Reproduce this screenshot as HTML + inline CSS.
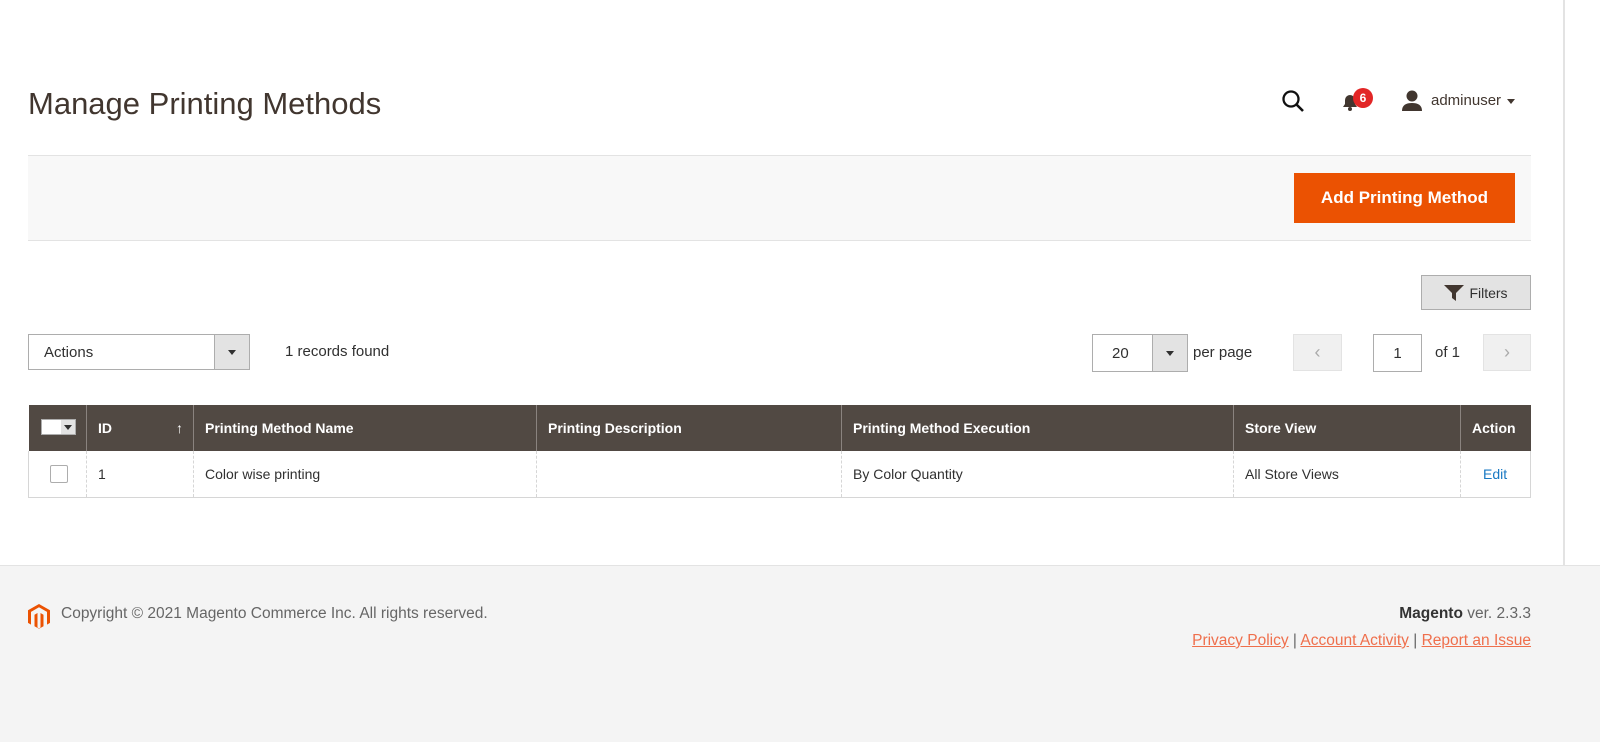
<!DOCTYPE html>
<html><head><style>
*{box-sizing:border-box;margin:0;padding:0}
body{width:1600px;height:742px;background:#fff;font-family:"Liberation Sans",sans-serif;color:#303030;position:relative;overflow:hidden;font-size:14px}
.abs{position:absolute}
h1{position:absolute;left:28px;top:86px;font-size:31px;font-weight:normal;color:#41362f}
.band{left:28px;top:155px;width:1503px;height:86px;background:#f8f8f8;border-top:1px solid #e3e3e3;border-bottom:1px solid #e3e3e3}
.btn{left:1294px;top:173px;width:221px;height:50px;background:#eb5202;color:#fff;font-weight:bold;font-size:17px;display:flex;align-items:center;justify-content:center}
.filt{left:1421px;top:275px;width:110px;height:35px;background:#e3e3e3;border:1px solid #adadad;display:flex;align-items:center;justify-content:center;font-size:14px;color:#303030;gap:5px}
.sel{border:1px solid #adadad;background:#fff;display:flex;align-items:center}
.dd{position:absolute;right:0;top:0;bottom:0;background:#e3e3e3;border-left:1px solid #adadad;display:flex;align-items:center;justify-content:center}
.tri{width:0;height:0;border-left:4px solid transparent;border-right:4px solid transparent;border-top:5px solid #303030}
.pg{background:#f0f0f0;border:1px solid #e3e3e3;color:#aaa;display:flex;align-items:center;justify-content:center;font-size:18px}
table{position:absolute;left:28px;top:405px;width:1503px;border-collapse:collapse}
th{background:#514943;color:#fff;text-align:left;font-size:14px;height:46px;padding-left:11px;border-left:1px solid #8a837f}
th:first-child{border-left:none}
td{height:46px;padding-left:11px;font-size:14px;border-left:1px dashed #d6d6d6;border-bottom:1px solid #d6d6d6}
td:first-child{border-left:1px solid #d6d6d6}
td:last-child{border-right:1px solid #d6d6d6}
.foot{left:0;top:565px;width:1600px;height:177px;background:#f4f4f4;border-top:1px solid #e3e3e3}
a{color:#ef6f4c;text-decoration:underline}
</style></head><body>
<div class="abs" style="left:1563px;top:0;width:2px;height:565px;background:#e3e3e3"></div>
<h1>Manage Printing Methods</h1>
<svg class="abs" style="left:1281px;top:89px" width="24" height="24" viewBox="0 0 24 24"><circle cx="10" cy="10" r="7.5" fill="none" stroke="#111" stroke-width="2.3"/><path d="M15.5 15.5L22 22" stroke="#111" stroke-width="2.6"/></svg>
<svg class="abs" style="left:1340px;top:92px" width="20" height="20" viewBox="0 0 20 20"><path d="M3 15h14l-2-3V8a5 5 0 0 0-10 0v4z" fill="#41362f"/><circle cx="10" cy="17" r="2" fill="#41362f"/></svg>
<div class="abs" style="left:1353px;top:88px;width:20px;height:20px;border-radius:50%;background:#e22626;color:#fff;font-weight:bold;font-size:12px;text-align:center;line-height:20px">6</div>
<svg class="abs" style="left:1401px;top:89px" width="22" height="22" viewBox="0 0 22 22"><circle cx="11" cy="7" r="5.5" fill="#41362f"/><path d="M1 22c0-6 4-8 10-8s10 2 10 8z" fill="#41362f"/></svg>
<div class="abs" style="left:1431px;top:92px;font-size:15px;color:#41362f">adminuser</div>
<div class="abs tri" style="left:1507px;top:99px;border-top-color:#41362f"></div>
<div class="abs band"></div>
<div class="abs btn">Add Printing Method</div>
<div class="abs filt"><svg width="20" height="16" viewBox="0 0 20 16"><path d="M0 0h20l-8 8v8l-4-3V8z" fill="#41362f"/></svg>Filters</div>
<div class="abs sel" style="left:28px;top:334px;width:222px;height:36px;padding-left:15px;font-size:15px">Actions<div class="dd" style="width:35px"><div class="tri"></div></div></div>
<div class="abs" style="left:285px;top:343px;font-size:15px">1 records found</div>
<div class="abs sel" style="left:1092px;top:334px;width:96px;height:38px;padding-left:19px;font-size:15px">20<div class="dd" style="width:35px"><div class="tri"></div></div></div>
<div class="abs" style="left:1193px;top:344px;font-size:15px">per page</div>
<div class="abs pg" style="left:1293px;top:334px;width:49px;height:37px">&#8249;</div>
<div class="abs sel" style="left:1373px;top:334px;width:49px;height:38px;justify-content:center;font-size:15px">1</div>
<div class="abs" style="left:1435px;top:344px;font-size:15px">of 1</div>
<div class="abs pg" style="left:1483px;top:334px;width:48px;height:37px">&#8250;</div>
<table>
<tr><th style="width:58px"><div style="display:inline-flex;width:35px;height:16px;background:#fff;border:1px solid #adadad;margin-left:1px"><div style="width:19px"></div><div style="flex:1;background:#e3e3e3;display:flex;align-items:center;justify-content:center"><div class="tri"></div></div></div></th>
<th style="width:107px">ID<span style="float:right;margin-right:10px;font-weight:normal">&#8593;</span></th>
<th style="width:343px">Printing Method Name</th><th style="width:305px">Printing Description</th><th style="width:392px">Printing Method Execution</th><th style="width:227px">Store View</th><th>Action</th></tr>
<tr><td><div style="width:18px;height:18px;border:1px solid #adadad;margin-left:10px;border-radius:2px"></div></td><td>1</td><td>Color wise printing</td><td></td><td>By Color Quantity</td><td>All Store Views</td><td><span style="color:#1979c3;margin-left:11px">Edit</span></td></tr>
</table>
<div class="abs foot"></div>
<svg class="abs" style="left:28px;top:604px" width="22" height="25" viewBox="0 0 22 25"><path d="M11 0L0 6.3v12.6l3 1.7V7.9l8-4.6 8 4.6v12.7l3-1.7V6.3zM9.5 9v14.5L11 24.4l1.5-.9V9l3 1.7v11.5l-4.5 2.6-4.5-2.6V10.7z" fill="#eb5202"/></svg>
<div class="abs" style="left:61px;top:605px;font-size:15.5px;color:#666">Copyright © 2021 Magento Commerce Inc. All rights reserved.</div>
<div class="abs" style="right:69px;top:605px;font-size:15.5px;color:#666"><b style="color:#333">Magento</b> ver. 2.3.3</div>
<div class="abs" style="right:69px;top:632px;font-size:15.5px;color:#666"><a>Privacy Policy</a> | <a>Account Activity</a> | <a>Report an Issue</a></div>
</body></html>
